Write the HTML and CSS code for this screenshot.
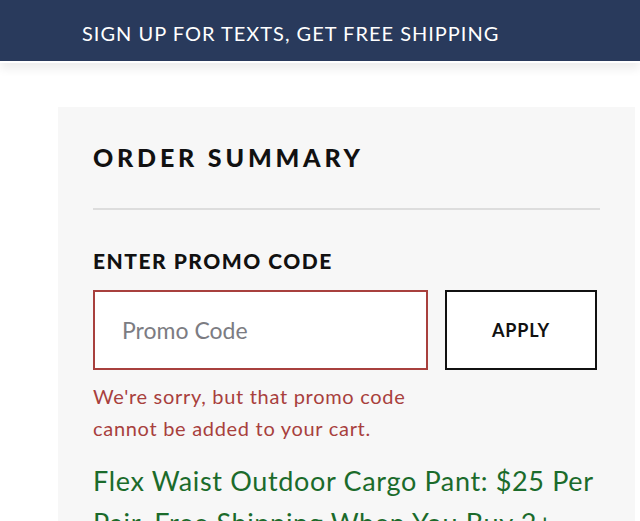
FILE: index.html
```html
<!DOCTYPE html>
<html lang="en">
<head>
  <meta charset="UTF-8">
  <meta name="viewport" content="width=device-width, initial-scale=1.0">
  <title>Cart</title>
  <link rel="stylesheet" href="styles.css">
</head>
<body>
  <!-- Promo Bar -->
  <div class="promo-bar">SIGN UP FOR TEXTS, GET FREE SHIPPING</div>

  <!-- Order Summary -->
  <div class="summary">
    <h2 class="summary-title">ORDER SUMMARY</h2>
    <hr class="divider">

    <h3 class="promo-label">ENTER PROMO CODE</h3>
    <div class="promo-form">
      <input type="text" class="promo-input" placeholder="Promo Code">
      <button class="apply-btn">APPLY</button>
    </div>
    <p class="promo-error">We're sorry, but that promo code<br>cannot be added to your cart.</p>

    <p class="promo-offer">Flex Waist Outdoor Cargo Pant: $25 Per Pair, Free Shipping When You Buy 2+</p>
  </div>
</body>
</html>
```

FILE: styles.css
```css
:root {
  --navy: #293a5c;
  --panel-bg: #f7f7f7;
  --error-red: #a8403d;
  --offer-green: #1b6b2b;
  --text-dark: #111111;
}
body {
  margin: 0;
  padding: 0;
  background: #ffffff;
  font-family: 'Lato', 'Open Sans', sans-serif;
  color: var(--text-dark);
  overflow: hidden;
}
/* Promo Bar */
.promo-bar {
  height: 61px;
  padding-left: 82px;
  background: var(--navy);
  color: #ffffff;
  font-size: 20px;
  line-height: 66px;
  letter-spacing: 1px;
  border-bottom: 2px solid #ffffff;
  box-shadow: 0 6px 9px rgba(0,0,0,0.07);
}
/* Order Summary */
.summary {
  margin: 44px 5px 0 58px;
  padding: 30px 35px 0 35px;
  background: var(--panel-bg);
  min-height: 500px;
}
.summary-title {
  margin: 0;
  font-size: 25px;
  font-weight: 900;
  letter-spacing: 3.8px;
  line-height: 40px;
}
.divider {
  margin: 31px 0 0 0;
  border: none;
  border-top: 2px solid #dddddd;
}
.promo-label {
  margin: 38px 0 0 0;
  font-size: 21px;
  font-weight: 900;
  letter-spacing: 1.5px;
  line-height: 26px;
}
.promo-form {
  display: flex;
  gap: 17px;
  margin-top: 16px;
  width: 504px;
}
.promo-input {
  width: 335px;
  height: 80px;
  box-sizing: border-box;
  padding: 0 27px;
  border: 2px solid var(--error-red);
  background: #ffffff;
  font-family: inherit;
  font-size: 23px;
  outline: none;
}
.promo-input::placeholder {
  color: #7c7c82;
}
.apply-btn {
  flex: 1;
  height: 80px;
  box-sizing: border-box;
  border: 2px solid #111111;
  background: #ffffff;
  color: var(--text-dark);
  font-family: inherit;
  font-size: 18px;
  font-weight: 700;
  letter-spacing: 0.8px;
  cursor: pointer;
}
.promo-error {
  margin: 10px 0 0 0;
  color: var(--error-red);
  font-size: 20px;
  letter-spacing: 0.7px;
  line-height: 32px;
}
.promo-offer {
  margin: 16px 0 0 0;
  color: var(--offer-green);
  font-size: 27px;
  letter-spacing: 0.65px;
  line-height: 42px;
}
```
